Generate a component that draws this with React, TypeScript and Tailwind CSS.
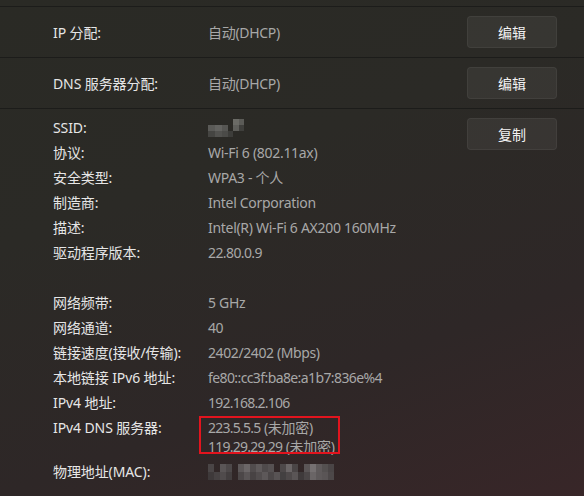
import React from "react";

const font = { fontFamily: '"Noto Sans", "Noto Sans CJK SC", sans-serif' };

function Btn({ children }: { children: React.ReactNode }) {
  return (
    <button className="w-[90px] h-[32px] rounded-[4px] bg-[#ffffff0f] border border-[#ffffff0d] text-[14px] text-[#f2f2f2] flex items-center justify-center">
      {children}
    </button>
  );
}

function SsidBlur() {
  const cells: [number, number, number, number, string][] = [
    [25, 1, 6, 6, "#6b6b66"],
    [31, 1, 5, 6, "#5b5b57"],
    [25, 7, 6, 6, "#5f5f5b"],
    [31, 7, 5, 6, "#3f3f3c"],
    [0, 7, 7, 6, "#5a5a57"],
    [7, 7, 7, 6, "#636360"],
    [14, 7, 6, 6, "#565653"],
    [0, 13, 7, 6, "#454542"],
    [7, 13, 7, 6, "#52524f"],
    [14, 13, 6, 6, "#4b4b48"],
    [20, 13, 5, 6, "#3d3d3a"],
  ];
  return (
    <svg width="40" height="20" className="block">
      {cells.map(([x, y, w, h, c], i) => (
        <rect key={i} x={x} y={y} width={w} height={h} fill={c} />
      ))}
    </svg>
  );
}

function MacBlur() {
  const top = ["#4a4546", "", "#5a5556", "#4d4849", "", "#5c5758", "#6b6667", "#514c4d", "#5f5a5b", "#4f4a4b", "#565152", "", "#4d4849", "#6a6566", "#4a4546", "", "#5a5556", "#757071", "#5f5a5b", "#545050", "#4a4546"];
  const bot = ["#3e393a", "#474243", "#504b4c", "#433e3f", "", "#4c4748", "#5a5556", "#484344", "#524d4e", "#5d5859", "#4c4748", "#585354", "#434041", "#4e494a", "#5a5556", "#3f3a3b", "#4b4647", "#6a6566", "#5e595a", "#5a5556", "#4d4849"];
  return (
    <svg width="126" height="16" className="block">
      {top.map((c, i) =>
        c ? <rect key={"t" + i} x={i * 6} y={0} width={6} height={8} fill={c} /> : null
      )}
      {bot.map((c, i) =>
        c ? <rect key={"b" + i} x={i * 6} y={8} width={6} height={8} fill={c} /> : null
      )}
    </svg>
  );
}

function Row({
  label,
  children,
  track = "tracking-[-0.3px]",
}: {
  label: string;
  children: React.ReactNode;
  track?: string;
}) {
  return (
    <div className="flex py-[3px] text-[14px] leading-[19px]">
      <div className="w-[155px] shrink-0 text-[#e6e6e6] tracking-[-0.1px]">{label}</div>
      <div className={"text-[#a8a8a8] " + track}>{children}</div>
    </div>
  );
}

export default function App() {
  return (
    <div
      style={font}
      className="w-[584px] h-[496px] overflow-hidden bg-[linear-gradient(160deg,#2a2a25_0%,#2b2a26_35%,#2e2727_70%,#382628_100%)]"
    >
      <div className="h-[6px]" />
      <div className="h-px bg-[#1c1c1a]" />
      <div className="h-[50px] flex items-center pl-[53px] pr-[27px] text-[14px]">
        <div className="w-[155px] text-[#e6e6e6] tracking-[-0.1px]">IP 分配:</div>
        <div className="flex-1 text-[#a8a8a8] tracking-[-0.3px]">自动(DHCP)</div>
        <Btn>编辑</Btn>
      </div>
      <div className="h-px bg-[#1c1c1a]" />
      <div className="h-[50px] flex items-center pl-[53px] pr-[27px] text-[14px]">
        <div className="w-[155px] text-[#e6e6e6] tracking-[-0.1px]">DNS 服务器分配:</div>
        <div className="flex-1 text-[#a8a8a8] tracking-[-0.3px]">自动(DHCP)</div>
        <Btn>编辑</Btn>
      </div>
      <div className="h-px bg-[#1c1c1a]" />
      <div className="flex pl-[53px] pr-[27px] pt-[6px]">
        <div className="flex-1">
          <Row label="SSID:">
            <div className="h-[19px] flex items-center">
              <SsidBlur />
            </div>
          </Row>
          <Row label="协议:">Wi-Fi 6 (802.11ax)</Row>
          <Row label="安全类型:">WPA3 - 个人</Row>
          <Row label="制造商:">Intel Corporation</Row>
          <Row label="描述:">Intel(R) Wi-Fi 6 AX200 160MHz</Row>
          <Row label="驱动程序版本:" track="tracking-[-0.6px]">22.80.0.9</Row>
          <div className="h-[25px]" />
          <Row label="网络频带:">5 GHz</Row>
          <Row label="网络通道:" track="tracking-[-0.6px]">40</Row>
          <Row label="链接速度(接收/传输):" track="tracking-[-0.4px]">2402/2402 (Mbps)</Row>
          <Row label="本地链接 IPv6 地址:" track="tracking-[-0.6px]">fe80::cc3f:ba8e:a1b7:836e%4</Row>
          <Row label="IPv4 地址:" track="tracking-[-0.75px]">192.168.2.106</Row>
          <Row label="IPv4 DNS 服务器:" track="tracking-[-0.3px]">
            <div className="relative">
              <div>
                <span className="tracking-[-0.75px]">223.5.5.5</span> (未加密)
              </div>
              <div>
                <span className="tracking-[-0.75px]">119.29.29.29</span> (未加密)
              </div>
              <div className="absolute left-[-9px] top-[-2px] w-[141px] h-[38px] border-2 border-[#e2141e]" />
            </div>
          </Row>
          <Row label="物理地址(MAC):">
            <div className="h-[19px] flex items-center">
              <MacBlur />
            </div>
          </Row>
        </div>
        <div className="pt-[3px]">
          <Btn>复制</Btn>
        </div>
      </div>
    </div>
  );
}
